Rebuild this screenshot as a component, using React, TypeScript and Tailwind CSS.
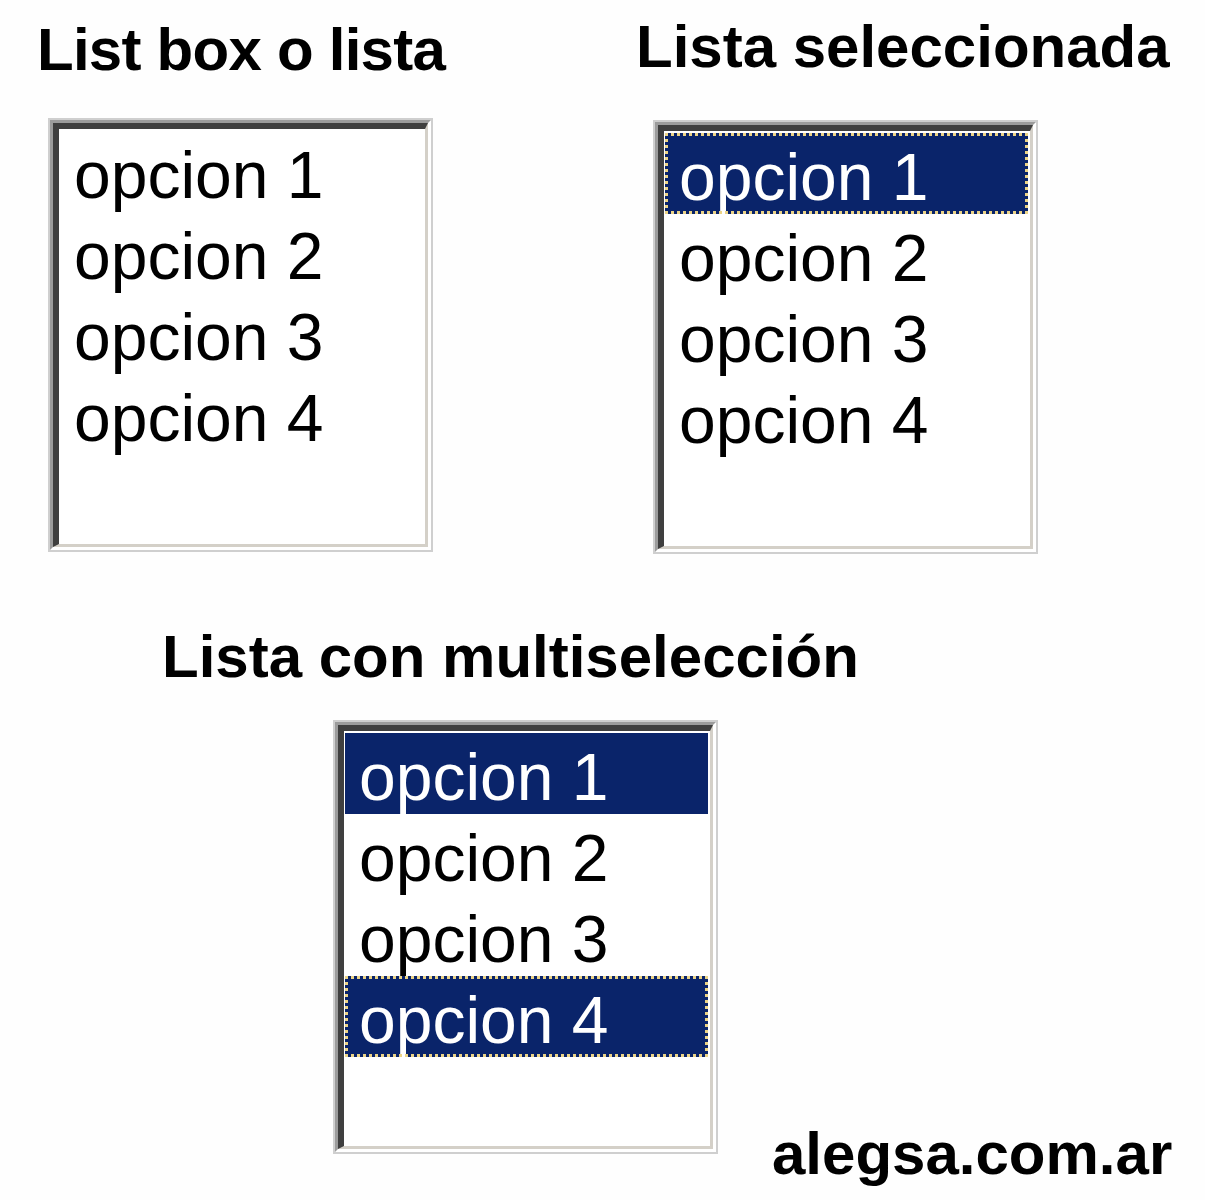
type Row = {
    label: string;
    selected?: boolean;
    focused?: boolean;
}

function ListBox({ rows }: { rows: Row[] }) {
    return (
        <div className="w-[385px] h-[434px] border-2 border-[#cfcfcf]">
            <div className="h-full border-[3px] border-t-[#9c9c9c] border-l-[#9c9c9c] border-b-white border-r-white">
                <div className="h-full border-t-[6px] border-l-[6px] border-b-[3px] border-r-[3px] border-t-[#3f3f3f] border-l-[#3f3f3f] border-b-[#d4d0c8] border-r-[#d4d0c8] bg-white pt-[2px] pl-[1px] pr-[2px]">
                    {rows.map((r) => (
                        <div
                            key={r.label}
                            className={`h-[81px] leading-[88px] pl-[14px] text-[66px] whitespace-nowrap ${
                                r.selected ? 'bg-[#0a246a] text-white' : 'text-black'
                            } ${r.focused ? 'outline-[3px] outline-dotted outline-offset-[-3px] outline-[#ecd487]' : ''}`}
                        >
                            {r.label}
                        </div>
                    ))}
                </div>
            </div>
        </div>
    );
}

export default function App() {
    const labels = ['opcion 1', 'opcion 2', 'opcion 3', 'opcion 4'];

    return (
        <div className="w-[1205px] h-[1200px] bg-[#fefefe] text-black overflow-hidden"
            style={{ fontFamily: '"Liberation Sans", Arial, sans-serif' }}>
            {/* fila superior */}
            <div className="flex items-start">
                <div className="ml-[37px] w-[599px] pt-[20px] flex flex-col">
                    <h1 className="text-[60px] leading-none font-bold tracking-[-0.75px] whitespace-nowrap">List box o lista</h1>
                    <div className="mt-[38px] ml-[11px]">
                        <ListBox rows={labels.map((l) => ({ label: l }))} />
                    </div>
                </div>
                <div className="pt-[17px] flex flex-col">
                    <h1 className="text-[60px] leading-none font-bold whitespace-nowrap">Lista seleccionada</h1>
                    <div className="mt-[43px] ml-[17px]">
                        <ListBox rows={labels.map((l, i) => ({ label: l, selected: i === 0, focused: i === 0 }))} />
                    </div>
                </div>
            </div>

            {/* multiselección */}
            <h1 className="mt-[73px] ml-[162px] text-[60px] leading-none font-bold whitespace-nowrap">
                Lista con multiselección
            </h1>
            <div className="mt-[33px] flex items-start">
                <div className="ml-[333px]">
                    <ListBox rows={labels.map((l, i) => ({ label: l, selected: i === 0 || i === 3, focused: i === 3 }))} />
                </div>
                <div className="ml-[54px] mt-[404px] text-[60px] leading-none font-bold whitespace-nowrap">
                    alegsa.com.ar
                </div>
            </div>
        </div>
    );
}
